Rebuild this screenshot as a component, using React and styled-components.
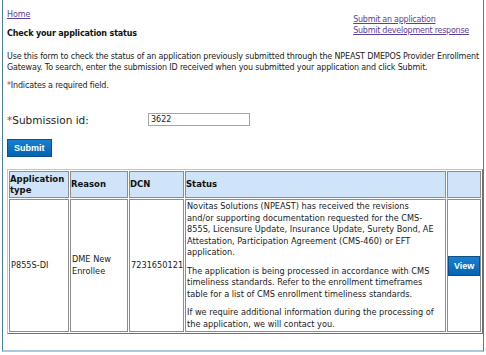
import React from 'react'
import styled, { createGlobalStyle } from 'styled-components'

const Global = createGlobalStyle`
  html, body {
    margin: 0;
    padding: 0;
    background: #fff;
  }
  body {
    font-family: 'DejaVu Sans', Verdana, sans-serif;
    font-size: 8px;
    color: #222;
  }
`

const Frame = styled.div`
  margin-left: 2px;
  width: 482px;
  height: 352px;
  box-sizing: border-box;
  border-left: 1px solid #4b7ea6;
  border-right: 1px solid #4b7ea6;
  border-bottom: 2px solid #a9c9de;
  padding: 9px 2px 0 4px;
`

const TopRow = styled.div`
  display: flex;
  justify-content: space-between;
  align-items: flex-start;
`

const Link = styled.a`
  color: #5d3f95;
  text-decoration: underline;
  cursor: pointer;
  line-height: 11px;
  letter-spacing: ${p => p.$tight ? -0.25 : -0.1}px;
`

const SideLinks = styled.div`
  display: flex;
  flex-direction: column;
  margin-top: 5px;
  margin-right: 12px;
`

const Title = styled.h1`
  margin: 8px 0 0;
  font-size: 8px;
  font-weight: bold;
  color: #111;
  line-height: 11px;
  letter-spacing: -0.15px;
`

const Text = styled.p`
  margin: ${p => p.$top || 0}px 0 0;
  line-height: 11px;
  color: #222;
  letter-spacing: -0.16px;
`

const Star = styled.span`
  color: #e0231f;
`

const FormRow = styled.div`
  display: flex;
  align-items: center;
  margin-top: 22px;
`

const Label = styled.label`
  width: 141px;
  font-size: 10.5px;
  color: #222;
`

const Input = styled.input`
  width: 102px;
  height: 13px;
  box-sizing: border-box;
  border: 1px solid #a6a6a6;
  padding: 0 2px;
  font-family: 'DejaVu Sans', Verdana, sans-serif;
  font-size: 8px;
  color: #222;
  outline: none;
`

const Button = styled.button`
  display: block;
  height: ${p => p.$h || 18}px;
  padding: 0 ${p => p.$px || 6}px;
  border: 1px solid #0d4f86;
  background: linear-gradient(#1a7fcf, #0066b3);
  color: #fff;
  font-family: 'Liberation Sans', Arial, sans-serif;
  font-weight: bold;
  font-size: 9px;
  cursor: pointer;
`

const SubmitWrap = styled.div`
  margin-top: 13px;
`

const Table = styled.table`
  margin-top: 12px;
  width: 475px;
  border-collapse: separate;
  border-spacing: 1px;
  border: 1px solid;
  border-color: #c4c4c4 #707070 #707070 #c4c4c4;
  table-layout: fixed;
`

const Th = styled.th`
  background: #cfe4f8;
  border: 1px solid #8d8d8d;
  text-align: left;
  vertical-align: middle;
  padding: 1px 1px 1px 0;
  font-size: 8.5px;
  line-height: 11px;
  color: #111;
  height: 23px;
`

const Td = styled.td`
  border: 1px solid #8d8d8d;
  vertical-align: middle;
  padding: 1px 2px 1px 1px;
  font-size: 8.2px;
  line-height: 11.5px;
  color: #222;
`

const StatusTd = styled(Td)`
  padding-right: 9px;
`

const ActionTd = styled(Td)`
  padding: 0;
`

const Para = styled.p`
  margin: 0 0 ${p => p.$gap ? 7 : 0}px;
`

export default function App() {
  return (
    <>
      <Global />
      <Frame>
        <TopRow>
          <div>
            <Link>Home</Link>
            <Title>Check your application status</Title>
          </div>
          <SideLinks>
            <Link $tight>Submit an application</Link>
            <Link $tight>Submit development response</Link>
          </SideLinks>
        </TopRow>
        <Text $top={12}>
          Use this form to check the status of an application previously submitted through the NPEAST DMEPOS Provider Enrollment
          Gateway. To search, enter the submission ID received when you submitted your application and click Submit.
        </Text>
        <Text $top={7}>
          <Star>*</Star>Indicates a required field.
        </Text>
        <FormRow>
          <Label>
            <Star>*</Star>Submission id:
          </Label>
          <Input defaultValue="3622" />
        </FormRow>
        <SubmitWrap>
          <Button>Submit</Button>
        </SubmitWrap>
        <Table>
          <colgroup>
            <col style={{ width: 60 }} />
            <col style={{ width: 58 }} />
            <col style={{ width: 55 }} />
            <col style={{ width: 261 }} />
            <col style={{ width: 34 }} />
          </colgroup>
          <thead>
            <tr>
              <Th>Application type</Th>
              <Th>Reason</Th>
              <Th>DCN</Th>
              <Th>Status</Th>
              <Th></Th>
            </tr>
          </thead>
          <tbody>
            <tr>
              <Td>P855S-DI</Td>
              <Td>DME New Enrollee</Td>
              <Td>7231650121</Td>
              <StatusTd>
                <Para $gap>
                  Novitas Solutions (NPEAST) has received the revisions and/or supporting documentation requested for the CMS-855S, Licensure Update, Insurance Update, Surety Bond, AE Attestation, Participation Agreement (CMS-460) or EFT application.
                </Para>
                <Para $gap>
                  The application is being processed in accordance with CMS timeliness standards. Refer to the enrollment timeframes table for a list of CMS enrollment timeliness standards.
                </Para>
                <Para>
                  If we require additional information during the processing of the application, we will contact you.
                </Para>
              </StatusTd>
              <ActionTd>
                <Button $h={20} $px={5}>View</Button>
              </ActionTd>
            </tr>
          </tbody>
        </Table>
      </Frame>
    </>
  )
}
